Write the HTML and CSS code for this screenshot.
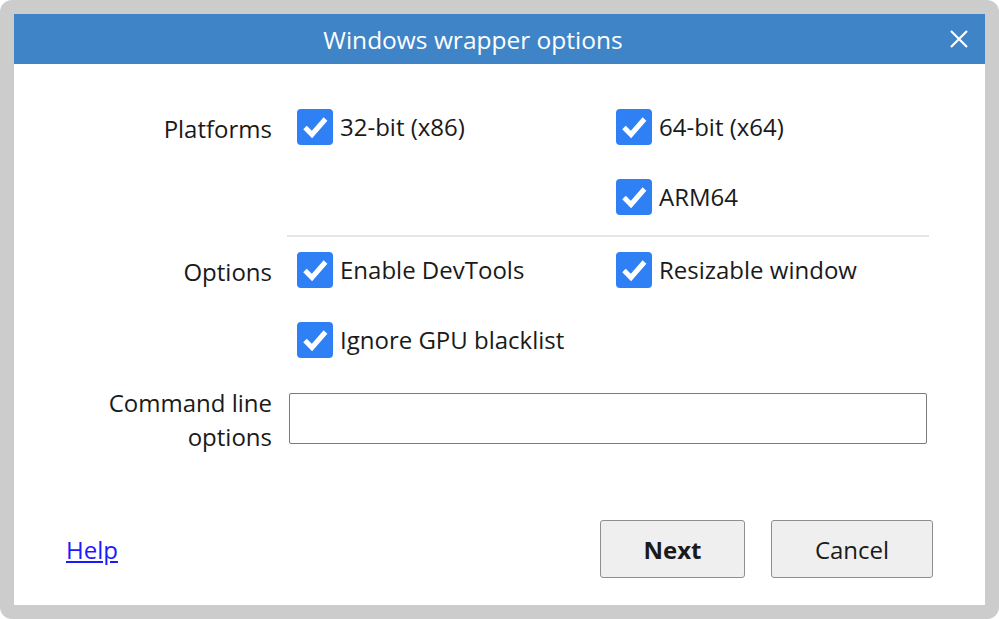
FILE: index.html
```html
<!DOCTYPE html>
<html lang="en">
<head>
    <meta charset="UTF-8">
    <meta name="viewport" content="width=device-width, initial-scale=1.0">
    <title>Windows wrapper options</title>
    <link rel="stylesheet" href="styles.css">
</head>
<body>
    <div class="frame">
        <div class="dialog">
            <header class="titlebar">
                <h1>Windows wrapper options</h1>
                <button class="close" type="button" aria-label="Close">
                    <svg width="18" height="18" viewBox="0 0 18 18">
                        <path d="M1 1 L17 17 M17 1 L1 17" stroke="#fff" stroke-width="2.2" fill="none"/>
                    </svg>
                </button>
            </header>

            <form class="form" id="wrapperForm">
                <div class="field-label">Platforms</div>
                <div class="checks">
                    <label class="check"><input type="checkbox" checked><span class="box"></span>32-bit (x86)</label>
                    <label class="check"><input type="checkbox" checked><span class="box"></span>64-bit (x64)</label>
                    <label class="check col-2"><input type="checkbox" checked><span class="box"></span>ARM64</label>
                </div>

                <hr class="separator">

                <div class="field-label">Options</div>
                <div class="checks">
                    <label class="check"><input type="checkbox" checked><span class="box"></span>Enable DevTools</label>
                    <label class="check"><input type="checkbox" checked><span class="box"></span>Resizable window</label>
                    <label class="check"><input type="checkbox" checked><span class="box"></span>Ignore GPU blacklist</label>
                </div>

                <label class="field-label multi" for="cmdLine">Command line<br>options</label>
                <input class="text-input" type="text" id="cmdLine">
            </form>

            <footer class="footer">
                <a href="#" class="help">Help</a>
                <div class="buttons">
                    <button type="submit" form="wrapperForm" class="btn primary">Next</button>
                    <button type="button" class="btn">Cancel</button>
                </div>
            </footer>
        </div>
    </div>
</body>
</html>
```

FILE: styles.css
```css
html, body {
    margin: 0;
    padding: 0;
    height: 100%;
    background: #fff;
}
body {
    font-family: "Open Sans", "Noto Sans", sans-serif;
    color: #1a1a1a;
}
.frame {
    box-sizing: border-box;
    height: 619px;
    padding: 14px;
    background: #cccccc;
    border-radius: 12px;
}
.dialog {
    display: flex;
    flex-direction: column;
    height: 100%;
    background: #fff;
}
.titlebar {
    display: flex;
    align-items: center;
    height: 50px;
    background: #3e84c6;
    color: #fff;
}
.titlebar h1 {
    flex: 1;
    margin: 0;
    text-align: center;
    font-size: 24.5px;
    font-weight: normal;
}
.close {
    width: 53px;
    height: 50px;
    padding: 0;
    border: none;
    background: none;
    display: flex;
    align-items: center;
    justify-content: center;
    cursor: pointer;
}

.form {
    display: grid;
    grid-template-columns: 258px 638px;
    column-gap: 17px;
    padding-top: 45px;
}
.field-label {
    text-align: right;
    font-size: 24px;
    line-height: 36px;
    padding-top: 2px;
}
.field-label.multi {
    line-height: 34px;
    padding-top: 0;
}
.checks {
    display: grid;
    grid-template-columns: 319px 319px;
    row-gap: 34px;
}
.check {
    display: flex;
    align-items: center;
    gap: 7px;
    margin-left: 8px;
    height: 36px;
    font-size: 24px;
    line-height: 38px;
    cursor: pointer;
}
.check.col-2 {
    grid-column: 2;
}
.check input {
    display: none;
}
.box {
    width: 36px;
    height: 36px;
    flex-shrink: 0;
    border-radius: 4px;
    background: #2f80f5 url("data:image/svg+xml,%3Csvg xmlns='http://www.w3.org/2000/svg' viewBox='0 0 36 36'%3E%3Cpath d='M8 18.5 L15 25.5 L28.5 10' stroke='white' stroke-width='5' fill='none'/%3E%3C/svg%3E") center / 36px 36px no-repeat;
}
.separator {
    grid-column: 2;
    margin: 20px 0 15px -2px;
    width: 642px;
    height: 2px;
    border: none;
    background: #e5e5e5;
}
.checks + .field-label.multi {
    margin-top: 28px;
}
.checks + .field-label.multi + .text-input {
    margin-top: 35px;
}
.text-input {
    box-sizing: border-box;
    height: 51px;
    border: 1px solid #7a7a7a;
    border-radius: 2px;
    font-size: 20px;
    padding: 0 8px;
}

.footer {
    margin-top: auto;
    display: flex;
    align-items: center;
    justify-content: space-between;
    padding: 0 52px 27px 52px;
}
.help {
    color: #1a1aff;
    font-size: 24px;
}
.buttons {
    display: flex;
    gap: 26px;
}
.btn {
    height: 58px;
    font-family: inherit;
    font-size: 24px;
    color: #1a1a1a;
    background: #efefef;
    border: 1px solid #8f8f8f;
    border-radius: 3px;
    cursor: pointer;
}
.btn.primary {
    width: 145px;
    font-weight: bold;
}
.btn:not(.primary) {
    width: 162px;
}
```
